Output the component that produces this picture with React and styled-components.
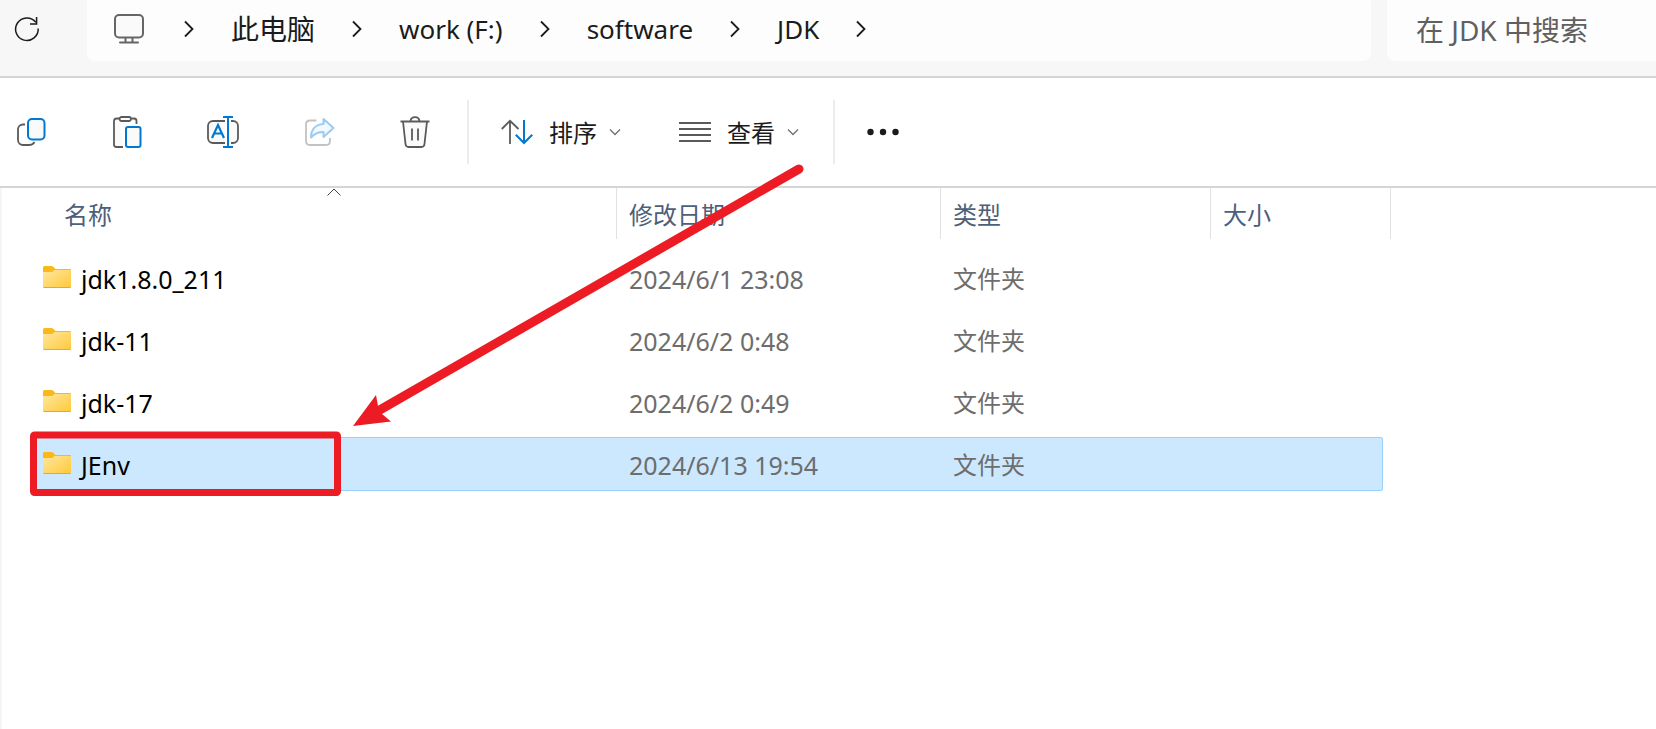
import React from "react";
import styled, { createGlobalStyle } from "styled-components";

const GlobalStyle = createGlobalStyle`
  * { box-sizing: border-box; }
  body {
    margin: 0;
    background: #fff;
    font-family: "Noto Sans", "Noto Sans CJK SC", sans-serif;
    color: #1b1b1b;
  }
`;

const Window = styled.div`
  position: relative;
  display: flex;
  flex-direction: column;
  min-height: 100vh;
  overflow: hidden;
`;

const AddressBar = styled.header`
  display: flex;
  align-items: flex-start;
  gap: 16px;
  height: 78px;
  padding-left: 12px;
  background: #f7f7f7;
  border-bottom: 2px solid #d5d5d5;
`;

const RefreshButton = styled.button`
  display: flex;
  align-items: center;
  width: 59px;
  height: 58px;
  padding: 0;
  border: 0;
  background: none;
`;

const Breadcrumb = styled.nav`
  flex: 1;
  display: flex;
  align-items: center;
  gap: 37px;
  height: 61px;
  padding: 0 27px 3px;
  border-radius: 2px 2px 8px 8px;
  background: #fdfdfd;
`;

const Crumb = styled.a`
  font-size: ${(p) => (p.$wide ? 28 : 26)}px;
  line-height: 40px;
  color: #1b1b1b;
  text-decoration: none;
  white-space: nowrap;
`;

const SearchBox = styled.input`
  width: 269px;
  height: 61px;
  padding: 0 0 2px 29px;
  border: 0;
  border-radius: 2px 0 0 8px;
  background: #fdfdfd;
  font-family: inherit;
  font-size: 28px;
  outline: none;
  &::placeholder { color: #606060; opacity: 1; }
`;

const Toolbar = styled.div`
  display: flex;
  align-items: center;
  height: 110px;
  padding-left: 15px;
  background: #fff;
  border-bottom: 2px solid #d5d5d5;
`;

const ToolGroup = styled.div`
  display: flex;
  align-items: center;
  gap: ${(p) => p.$gap}px;
`;

const ToolButton = styled.button`
  display: flex;
  align-items: center;
  padding: 0;
  border: 0;
  background: none;
  font-family: inherit;
  font-size: 24px;
  line-height: 32px;
  color: #1b1b1b;
`;

const ToolLabel = styled.span`
  margin: 0 12px 0 16px;
  padding-top: 2px;
`;

const Divider = styled.div`
  width: 2px;
  height: 64px;
  margin: 0 32px 0 ${(p) => p.$before}px;
  background: #ececec;
`;

const FilePane = styled.main`
  flex: 1;
  border-left: 2px solid #f5f5f5;
`;

const FileTable = styled.table`
  display: block;
`;

const TableHead = styled.thead`
  display: block;
`;

const HeadRow = styled.tr`
  display: grid;
  grid-template-columns: 564px 324px 270px 181px;
  height: 51px;
  padding-left: 50px;
`;

const HeadCell = styled.th`
  position: relative;
  padding: 10px 12px 7px;
  border-left: ${(p) => (p.$first ? 0 : 1)}px solid #e2e2e2;
  font-size: 24px;
  font-weight: 400;
  line-height: 34px;
  text-align: left;
  color: #4c607a;
  &:last-child { border-right: 1px solid #e2e2e2; }
`;

const SortMark = styled.svg`
  position: absolute;
  top: 0;
  left: 50%;
  transform: translateX(-50%);
`;

const TableBody = styled.tbody`
  display: grid;
  gap: 8px;
  padding: 12px 0 0 29px;
`;

const FileRow = styled.tr`
  display: grid;
  grid-template-columns: 584px 324px 270px 1fr;
  align-items: center;
  width: 1352px;
  height: 54px;
  border: 1px solid ${(p) => (p.$selected ? "#99d1ff" : "transparent")};
  border-radius: 2px;
  background: ${(p) => (p.$selected ? "#cce8ff" : "transparent")};
`;

const NameCell = styled.td`
  display: flex;
  align-items: center;
  gap: 10px;
  padding: 0 0 0 11px;
  font-size: 25px;
  line-height: 34px;
  color: #000;
`;

const DetailCell = styled.td`
  padding: 2px 0 0 13px;
  font-size: ${(p) => (p.$numeric ? 25 : 24)}px;
  line-height: 34px;
  color: #6d6d6d;
`;

const Annotation = styled.svg`
  position: absolute;
  top: 0;
  left: 0;
  pointer-events: none;
`;

const DARK = "#5a5a5a";
const BLUE = "#0078d4";

const RefreshIcon = () => (
  <svg width="28" height="28" viewBox="0 0 28 28" fill="none" stroke="#1b1b1b" strokeWidth="1.5">
    <path d="M26.2 13.5A11.3 11.3 0 1 1 23.8 7.2" />
    <path d="M24.6 2V9H18" />
  </svg>
);

const MonitorIcon = () => (
  <svg width="33" height="30" viewBox="0 0 33 30" fill="none" stroke="#666" strokeWidth="2">
    <rect x="1" y="1" width="28" height="22.500" rx="4" fill="#fafafa" />
    <path d="M11.500 24V28M18.500 24V28" />
    <path d="M6 28.500H24" strokeLinecap="round" />
  </svg>
);

const Chevron = () => (
  <svg width="10" height="18" viewBox="0 0 10 18" fill="none" stroke="#1b1b1b" strokeWidth="1.8">
    <path d="M1 1.500L8.500 9L1 16.500" />
  </svg>
);

const DownIcon = () => (
  <svg width="12" height="8" viewBox="0 0 12 8" fill="none" stroke="#707070" strokeWidth="1.3">
    <path d="M1 1.500L6 6.500L11 1.500" />
  </svg>
);

const Icon = ({ children }) => (
  <svg width="32" height="32" viewBox="0 0 32 32" fill="none" stroke={DARK} strokeWidth="1.8">
    {children}
  </svg>
);

const CopyIcon = () => (
  <Icon>
    <path d="M10 8.500H8A5 5 0 0 0 3 13.500V24A5 5 0 0 0 8 29H14Q18 29 19.500 26" />
    <rect x="13" y="3" width="16.500" height="20.500" rx="4" fill="#fafafa" stroke={BLUE} strokeWidth="2" />
  </Icon>
);

const PasteIcon = () => (
  <Icon>
    <path d="M12 31H5.500Q3 31 3 28.500V5Q3 2.500 5.500 2.500H8.500M20.500 2.500H23Q25.500 2.500 25.500 5V8" fill="#fafafa" />
    <rect x="8.500" y="1" width="11.500" height="4" rx="2" />
    <rect x="15" y="11" width="14.500" height="20" rx="2" fill="#fafafa" stroke={BLUE} strokeWidth="2" />
  </Icon>
);

const RenameIcon = () => (
  <Icon>
    <path d="M18 5H6A5 5 0 0 0 1 10V22A5 5 0 0 0 6 27H18M24 5H26A5 5 0 0 1 31 10V22A5 5 0 0 1 26 27H24" fill="#fafafa" />
    <path d="M5 22L11 9L17 22M7 17.500H15" stroke={BLUE} strokeWidth="2.200" />
    <path d="M21 1V31M16 1H26M16 31H26" stroke={BLUE} strokeWidth="2" />
  </Icon>
);

const ShareIcon = () => (
  <Icon>
    <path d="M13.500 4.500H7Q3 4.500 3 8.500V25Q3 29 7 29H23Q27 29 27 25V22" stroke="#c2c2c2" />
    <path d="M20.500 3L30.500 12L20.500 21V16C15 16 11.500 17.500 8 21.500C8 13 13 8.500 20.500 8Z" fill="#f2f8fd" stroke="#9ccbf0" strokeWidth="2" strokeLinejoin="round" />
  </Icon>
);

const DeleteIcon = () => (
  <Icon>
    <path d="M4 5.500L6.500 28Q6.800 31 9.500 31H22.500Q25.200 31 25.500 28L28 5.500" fill="#fafafa" />
    <path d="M1.500 5.500H30.500M11.500 5Q12 1.200 16 1.200T20.500 5M13 12.500V24.500M19 12.500V24.500" />
  </Icon>
);

const SortIcon = () => (
  <Icon>
    <path d="M9 28V4.500M0.800 13L9 4.800L17.500 13" />
    <path d="M23 4V27M14.800 18.800L23 27L31.200 18.800" stroke={BLUE} strokeWidth="2" />
  </Icon>
);

const ListIcon = () => (
  <Icon>
    <path d="M0 7H32M0 13H32M0 19H32M0 25H32" />
  </Icon>
);

const MoreIcon = () => (
  <Icon>
    <g fill="#1b1b1b" stroke="none">
      <circle cx="3.500" cy="16" r="3.200" />
      <circle cx="16" cy="16" r="3.200" />
      <circle cx="28.500" cy="16" r="3.200" />
    </g>
  </Icon>
);

const FolderIcon = () => (
  <svg width="28" height="24" viewBox="0 0 28 24">
    <defs>
      <linearGradient id="folder" x1="0" y1="0" x2="1" y2="1">
        <stop offset="0" stopColor="#ffe7a0" />
        <stop offset="1" stopColor="#ffc938" />
      </linearGradient>
    </defs>
    <path d="M0 1.500Q0 0 1.500 0H8.500Q10 0 11 1.500L12.500 3H27Q28 3 28 4V12H0Z" fill="#fab81b" />
    <path d="M0 6H8.500Q10 6 11.500 4H28V21Q28 22 27 22H1Q0 22 0 21Z" fill="url(#folder)" />
    <path d="M0.500 21.500H27.500" stroke="#eba91f" />
  </svg>
);

const NameText = styled.span`
  padding-top: 2px;
`;

const path = [
  { label: "此电脑", wide: true },
  { label: "work (F:)" },
  { label: "software" },
  { label: "JDK" },
];

const files = [
  { name: "jdk1.8.0_211", date: "2024/6/1 23:08" },
  { name: "jdk-11", date: "2024/6/2 0:48" },
  { name: "jdk-17", date: "2024/6/2 0:49" },
  { name: "JEnv", date: "2024/6/13 19:54", selected: true },
];

const actions = [
  { label: "复制", Glyph: CopyIcon },
  { label: "粘贴", Glyph: PasteIcon },
  { label: "重命名", Glyph: RenameIcon },
  { label: "共享", Glyph: ShareIcon },
  { label: "删除", Glyph: DeleteIcon },
];

export default function App() {
  return (
    <Window>
      <GlobalStyle />
      <AddressBar>
        <RefreshButton aria-label="刷新"><RefreshIcon /></RefreshButton>
        <Breadcrumb aria-label="路径">
          <MonitorIcon />
          <Chevron />
          {path.map((item) => (
            <React.Fragment key={item.label}>
              <Crumb href="#" $wide={item.wide}>{item.label}</Crumb>
              <Chevron />
            </React.Fragment>
          ))}
        </Breadcrumb>
        <SearchBox type="search" aria-label="在 JDK 中搜索" placeholder="在 JDK 中搜索" />
      </AddressBar>

      <Toolbar>
        <ToolGroup $gap={64}>
          {actions.map(({ label, Glyph }) => (
            <ToolButton key={label} aria-label={label}><Glyph /></ToolButton>
          ))}
        </ToolGroup>
        <Divider $before={36} />
        <ToolGroup $gap={58}>
          <ToolButton><SortIcon /><ToolLabel>排序</ToolLabel><DownIcon /></ToolButton>
          <ToolButton><ListIcon /><ToolLabel>查看</ToolLabel><DownIcon /></ToolButton>
        </ToolGroup>
        <Divider $before={34} />
        <ToolButton aria-label="查看更多"><MoreIcon /></ToolButton>
      </Toolbar>

      <FilePane>
        <FileTable>
          <TableHead>
            <HeadRow>
              <HeadCell $first scope="col">
                名称
                <SortMark width="14" height="8" viewBox="0 0 14 8" fill="none" stroke="#444">
                  <path d="M0.500 7.500L7 1L13.500 7.500" />
                </SortMark>
              </HeadCell>
              <HeadCell scope="col">修改日期</HeadCell>
              <HeadCell scope="col">类型</HeadCell>
              <HeadCell scope="col">大小</HeadCell>
            </HeadRow>
          </TableHead>
          <TableBody>
            {files.map((file) => (
              <FileRow key={file.name} $selected={file.selected}>
                <NameCell><FolderIcon /><NameText>{file.name}</NameText></NameCell>
                <DetailCell $numeric>{file.date}</DetailCell>
                <DetailCell>文件夹</DetailCell>
                <DetailCell />
              </FileRow>
            ))}
          </TableBody>
        </FileTable>
      </FilePane>

      <Annotation width="820" height="510" viewBox="0 0 820 510" aria-hidden="true">
        <path d="M799 169L378 411" stroke="#ed1c24" strokeWidth="9" strokeLinecap="round" />
        <path d="M353 426L376 395L378 406L382 414L391 421.500Z" fill="#ed1c24" />
        <rect x="33.500" y="435" width="304" height="57.500" rx="1" fill="none" stroke="#ed1c24" strokeWidth="7" strokeLinejoin="round" />
      </Annotation>
    </Window>
  );
}
